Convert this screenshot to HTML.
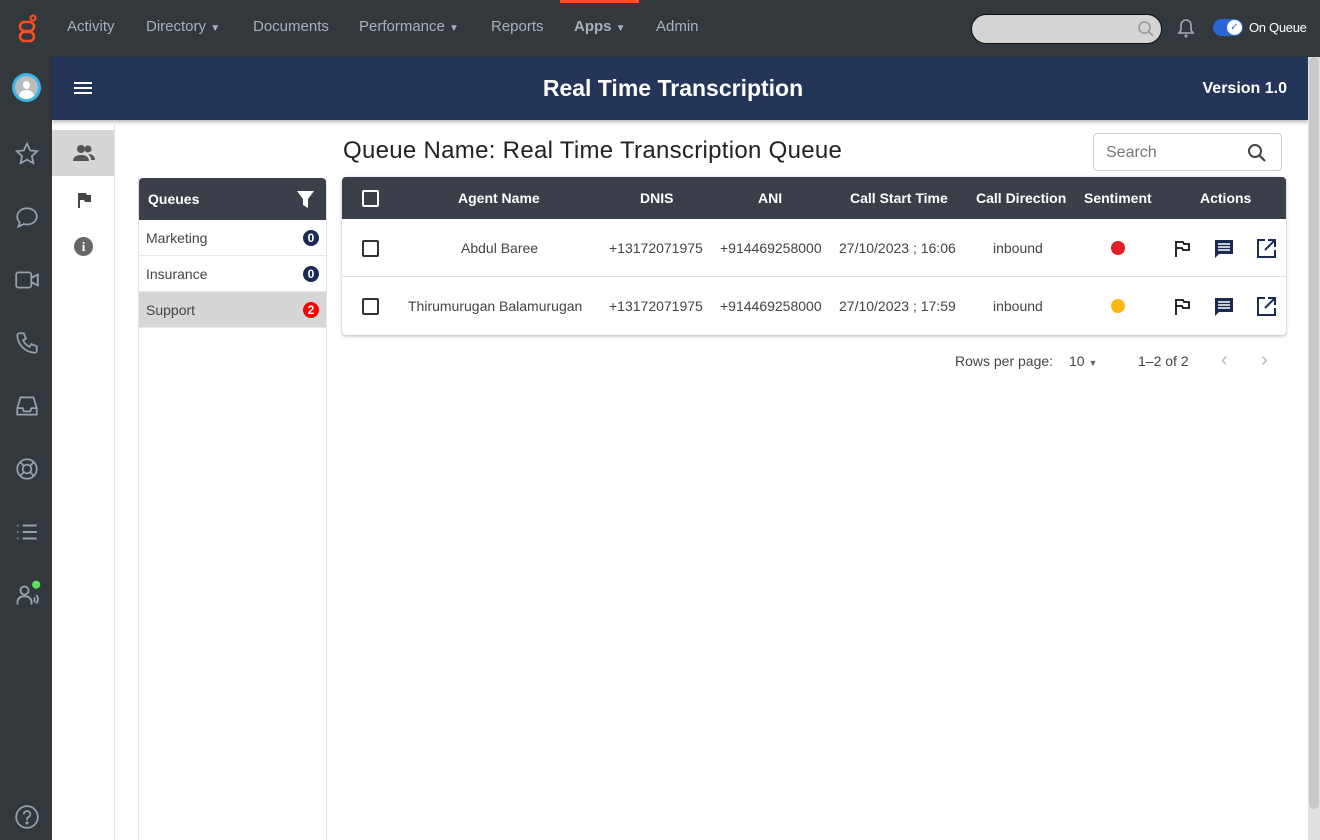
<!DOCTYPE html>
<html><head><meta charset="utf-8"><style>
*{box-sizing:border-box;margin:0;padding:0}
body{width:1320px;height:840px;overflow:hidden;background:#fff;font-family:"Liberation Sans",sans-serif;position:relative}
.top{position:absolute;left:0;top:0;width:1320px;height:57px;background:#33383d}
.nav{position:absolute;top:18px;font-size:15px;color:#a8b0b9}
.side{position:absolute;left:0;top:57px;width:52px;height:783px;background:#33383d}
.ic{position:absolute;left:14px}
.hdr{position:absolute;left:52px;top:57px;width:1256px;height:63px;background:#233659;box-shadow:0 2px 4px rgba(0,0,0,.3)}
.sb{position:absolute;left:1308px;top:57px;width:12px;height:783px;background:#e0e0e0}
.sb div{position:absolute;left:1px;top:0;width:10px;height:752px;background:#c9c9c9;border-radius:5px}
.sec{position:absolute;left:52px;top:120px;width:63px;height:720px;border-right:1px solid #e4e4e4}
.qp{position:absolute;left:138px;top:178px;width:189px;height:662px;border-left:1px solid #e4e4e4;border-right:1px solid #e4e4e4}
.qh{height:42px;background:#3a3f4a;border-radius:4px 4px 0 0;color:#fff;font-weight:bold;font-size:14px;padding:13px 9px;position:relative}
.qi{height:36px;border-bottom:1px solid #e8e8e8;font-size:14px;color:#444;padding:10px 7px;position:relative}
.bd{position:absolute;right:7px;top:10px;width:16px;height:16px;border-radius:50%;background:#1a2a52;color:#fff;font-size:12px;font-weight:bold;text-align:center;line-height:16px}
.tbl{position:absolute;left:342px;top:177px;width:944px;height:158px;box-shadow:0 1px 3px rgba(0,0,0,.3);border-radius:4px}
.th{height:42px;background:#3a3f4a;border-radius:4px 4px 0 0;position:relative;color:#fff;font-weight:bold;font-size:14px}
.row{height:58px;border-bottom:1px solid #e2e2e2;position:relative;font-size:14px;color:#444}
.c{position:absolute;text-align:center;white-space:nowrap}
.th .c{top:13px}.row .c{top:21px}
.cb{position:absolute;left:20px;width:17px;height:17px;border:2px solid #333;border-radius:2px}
.dot{position:absolute;left:769px;top:22px;width:14px;height:14px;border-radius:50%}
</style></head><body>
<div class="top">
 <svg style="position:absolute;left:17px;top:14px" width="22" height="30" viewBox="0 0 22 30"><circle cx="16" cy="4" r="2.5" fill="none" stroke="#ff4f1f" stroke-width="2"/><rect x="3" y="8" width="14" height="9" rx="4.5" fill="none" stroke="#ff4f1f" stroke-width="2.5"/><rect x="3" y="18" width="14" height="9" rx="4.5" fill="none" stroke="#ff4f1f" stroke-width="2.5"/></svg>
 <div class="nav" style="left:67px">Activity</div>
 <div class="nav" style="left:146px">Directory <span style="font-size:10px">▼</span></div>
 <div class="nav" style="left:253px">Documents</div>
 <div class="nav" style="left:359px">Performance <span style="font-size:10px">▼</span></div>
 <div class="nav" style="left:491px">Reports</div>
 <div style="position:absolute;left:560px;top:0;width:79px;height:3px;background:#ff4f1f"></div>
 <div class="nav" style="left:574px;font-weight:bold">Apps <span style="font-size:10px">▼</span></div>
 <div class="nav" style="left:656px">Admin</div>
 <div style="position:absolute;left:971px;top:14px;width:191px;height:30px;border-radius:15px;background:#d4d4d4;border:1px solid #111"></div>
 <svg style="position:absolute;left:1137px;top:20px" width="18" height="18" viewBox="0 0 18 18"><circle cx="7.5" cy="7.5" r="5.5" fill="none" stroke="#999" stroke-width="1.6"/><path d="M11.5 11.5L16 16" stroke="#999" stroke-width="1.6"/></svg>
 <svg style="position:absolute;left:1175px;top:16px" width="22" height="24" viewBox="0 0 22 24"><path d="M4 17h14l-2-3v-5a5 5 0 0 0-10 0v5z" fill="none" stroke="#aab" stroke-width="1.6"/><circle cx="11" cy="20" r="1.5" fill="#aab"/></svg>
 <div style="position:absolute;left:1213px;top:19px;width:30px;height:17px;border-radius:9px;background:#2a66d4"></div>
 <div style="position:absolute;left:1227px;top:20px;width:15px;height:15px;border-radius:50%;background:#fff;color:#2a66d4;font-size:10px;text-align:center;line-height:15px">✓</div>
 <div style="position:absolute;left:1249px;top:20px;color:#fff;font-size:13px;letter-spacing:-0.3px">On Queue</div>
</div>
<div class="side">
 <div style="position:absolute;left:12px;top:16px;width:29px;height:29px;border-radius:50%;background:#3bb4e8;padding:3px"><div style="width:23px;height:23px;border-radius:50%;background:#bbb;position:relative;overflow:hidden"><div style="position:absolute;left:8px;top:5px;width:7px;height:8px;border-radius:50%;background:#fff"></div><div style="position:absolute;left:4px;top:14px;width:15px;height:12px;border-radius:50%;background:#fff"></div></div></div>
 <svg class="ic" style="top:84px" width="26" height="26" viewBox="0 0 24 24" fill="none" stroke="#95a2b0" stroke-width="1.6"><path d="M12 2.5l2.9 6.2 6.6.7-5 4.5 1.4 6.6L12 17.2l-5.9 3.3 1.4-6.6-5-4.5 6.6-.7z"/></svg>
 <svg class="ic" style="top:148px" width="26" height="26" viewBox="0 0 24 24" fill="none" stroke="#95a2b0" stroke-width="1.6"><path d="M12 3c5 0 9 3.3 9 7.5S17 18 12 18c-1 0-2-.1-3-.4L4 20l1.3-4A7.3 7.3 0 0 1 3 10.5C3 6.3 7 3 12 3z"/></svg>
 <svg class="ic" style="top:210px" width="26" height="26" viewBox="0 0 24 24" fill="none" stroke="#95a2b0" stroke-width="1.6"><rect x="2" y="5" width="14" height="14" rx="2"/><path d="M16 10l6-3v10l-6-3"/></svg>
 <svg class="ic" style="top:273px" width="26" height="26" viewBox="0 0 24 24" fill="none" stroke="#95a2b0" stroke-width="1.6"><path d="M5 3h4l2 5-2.5 1.5a11 11 0 0 0 6 6L16 13l5 2v4a2 2 0 0 1-2 2A17 17 0 0 1 3 5a2 2 0 0 1 2-2z"/></svg>
 <svg class="ic" style="top:336px" width="26" height="26" viewBox="0 0 24 24" fill="none" stroke="#95a2b0" stroke-width="1.6"><path d="M3 14l3-10h12l3 10v6H3z"/><path d="M3 14h5l1 3h6l1-3h5"/></svg>
 <svg class="ic" style="top:399px" width="26" height="26" viewBox="0 0 24 24" fill="none" stroke="#95a2b0" stroke-width="1.6"><circle cx="12" cy="12" r="9"/><circle cx="12" cy="12" r="4"/><path d="M5.6 5.6l3.6 3.6M18.4 5.6l-3.6 3.6M5.6 18.4l3.6-3.6M18.4 18.4l-3.6-3.6"/></svg>
 <svg class="ic" style="top:462px" width="26" height="26" viewBox="0 0 24 24" fill="none" stroke="#95a2b0" stroke-width="1.8"><path d="M8 6h13M8 12h13M8 18h13M3 6h1M3 12h1M3 18h1"/></svg>
 <svg class="ic" style="top:523px" width="28" height="28" viewBox="0 0 24 24" fill="none" stroke="#95a2b0" stroke-width="1.6"><circle cx="9" cy="9" r="3.5"/><path d="M3 21v-2a5 5 0 0 1 5-5h2a5 5 0 0 1 5 5v2M17 15c1 1 1 3 0 4M19 13c2 2 2 5 0 7"/><circle cx="19" cy="4" r="3.5" fill="#5de05d" stroke="none"/></svg>
 <svg class="ic" style="top:747px" width="26" height="26" viewBox="0 0 24 24" fill="none" stroke="#95a2b0" stroke-width="1.6"><circle cx="12" cy="12" r="10"/><path d="M9 9.5a3 3 0 1 1 4 2.8c-.7.3-1 .8-1 1.5V15"/><circle cx="12" cy="17.5" r=".6" fill="#95a2b0"/></svg>
</div>
<div class="hdr">
 <div style="position:absolute;left:22px;top:25px;width:18px;height:2px;background:#fff;box-shadow:0 5px 0 #fff,0 10px 0 #fff"></div>
 <div style="position:absolute;left:0;width:1242px;text-align:center;top:18px;color:#fff;font-weight:bold;font-size:23px">Real Time Transcription</div>
 <div style="position:absolute;right:21px;top:23px;color:#fff;font-weight:bold;font-size:16px">Version 1.0</div>
</div>
<div class="sb"><div></div></div>
<div class="sec">
 <div style="position:absolute;left:0;top:10px;width:62px;height:46px;background:#d6d6d6"></div>
 <svg style="position:absolute;left:21px;top:24px" width="22" height="18" viewBox="0 0 22 18" fill="#555"><circle cx="8" cy="5" r="4"/><path d="M0 17c0-4 3-6 8-6s8 2 8 6z"/><circle cx="15" cy="5" r="3.5"/><path d="M15 10c4 0 7 2 7 6h-4c0-3-1-4-3-6z"/></svg>
 <svg style="position:absolute;left:25px;top:72px" width="14" height="16" viewBox="0 0 14 16" fill="#444"><path d="M1 1h2v15H1zM3 1h6l1 2h4v7H8l-1-2H3z"/></svg>
 <div style="position:absolute;left:22px;top:117px;width:19px;height:19px;border-radius:50%;background:#666;color:#fff;font-size:13px;font-weight:bold;text-align:center;line-height:19px;font-family:'Liberation Serif',serif">i</div>
</div>
<div style="position:absolute;left:343px;top:137px;font-size:24px;color:#222;letter-spacing:0.3px">Queue Name: Real Time Transcription Queue</div>
<div style="position:absolute;left:1093px;top:133px;width:189px;height:38px;border:1px solid #ccc;border-radius:4px;padding:10px 12px;font-size:16px;color:#777">Search
 <svg style="position:absolute;right:14px;top:9px" width="20" height="20" viewBox="0 0 20 20"><circle cx="8" cy="8" r="6" fill="none" stroke="#444" stroke-width="2"/><path d="M12.5 12.5L18 18" stroke="#444" stroke-width="2.2"/></svg></div>
<div class="qp">
 <div class="qh">Queues<svg style="position:absolute;right:12px;top:13px" width="17" height="17" viewBox="0 0 17 17" fill="#fff"><path d="M0 0h17l-6 8v9l-5-3V8z"/></svg></div>
 <div class="qi">Marketing<div class="bd">0</div></div>
 <div class="qi">Insurance<div class="bd">0</div></div>
 <div class="qi" style="background:#d6d6d6">Support<div class="bd" style="background:#f00">2</div></div>
</div>
<div class="tbl">
 <div class="th"><div class="cb" style="top:13px;border-color:#fff"></div>
  <div class="c" style="left:116px">Agent Name</div><div class="c" style="left:298px">DNIS</div><div class="c" style="left:416px">ANI</div><div class="c" style="left:508px">Call Start Time</div><div class="c" style="left:634px">Call Direction</div><div class="c" style="left:742px">Sentiment</div><div class="c" style="left:858px">Actions</div></div>
 <div class="row"><div class="cb" style="top:21px"></div><div class="c" style="left:119px">Abdul Baree</div><div class="c" style="left:267px">+13172071975</div><div class="c" style="left:378px">+914469258000</div><div class="c" style="left:497px">27/10/2023 ; 16:06</div><div class="c" style="left:651px">inbound</div><div class="dot" style="background:#e31e24"></div>
 <svg style="position:absolute;left:832px;top:21px" width="17" height="17" viewBox="0 0 17 17" fill="none" stroke="#111" stroke-width="1.8"><path d="M2 1v16M2 2h7l1 2h5v6H9l-1-2H2"/></svg>
 <svg style="position:absolute;left:872px;top:20px" width="20" height="20" viewBox="0 0 20 20"><path d="M1 1h18v14H5l-4 4z" fill="#1a2a52"/><path d="M4 5h12M4 8h12M4 11h12" stroke="#fff" stroke-width="1.4"/></svg>
 <svg style="position:absolute;left:915px;top:20px" width="19" height="19" viewBox="0 0 19 19" fill="none" stroke="#1a2a52" stroke-width="2"><path d="M8 1H1v17h17v-7M11 1h7v7M18 1L8 11"/></svg></div>
 <div class="row" style="border:none"><div class="cb" style="top:21px"></div><div class="c" style="left:66px">Thirumurugan Balamurugan</div><div class="c" style="left:267px">+13172071975</div><div class="c" style="left:378px">+914469258000</div><div class="c" style="left:497px">27/10/2023 ; 17:59</div><div class="c" style="left:651px">inbound</div><div class="dot" style="background:#fdb913"></div>
 <svg style="position:absolute;left:832px;top:21px" width="17" height="17" viewBox="0 0 17 17" fill="none" stroke="#111" stroke-width="1.8"><path d="M2 1v16M2 2h7l1 2h5v6H9l-1-2H2"/></svg>
 <svg style="position:absolute;left:872px;top:20px" width="20" height="20" viewBox="0 0 20 20"><path d="M1 1h18v14H5l-4 4z" fill="#1a2a52"/><path d="M4 5h12M4 8h12M4 11h12" stroke="#fff" stroke-width="1.4"/></svg>
 <svg style="position:absolute;left:915px;top:20px" width="19" height="19" viewBox="0 0 19 19" fill="none" stroke="#1a2a52" stroke-width="2"><path d="M8 1H1v17h17v-7M11 1h7v7M18 1L8 11"/></svg></div>
</div>
<div style="position:absolute;left:955px;top:353px;font-size:14px;color:#444">Rows per page:</div>
<div style="position:absolute;left:1069px;top:353px;font-size:14px;color:#444">10 <span style="font-size:9px;color:#666">▼</span></div>
<div style="position:absolute;left:1138px;top:353px;font-size:14px;color:#444">1–2 of 2</div>
<div style="position:absolute;left:1221px;top:349px;font-size:20px;color:#bbb">‹</div>
<div style="position:absolute;left:1261px;top:349px;font-size:20px;color:#bbb">›</div>
</body></html>
